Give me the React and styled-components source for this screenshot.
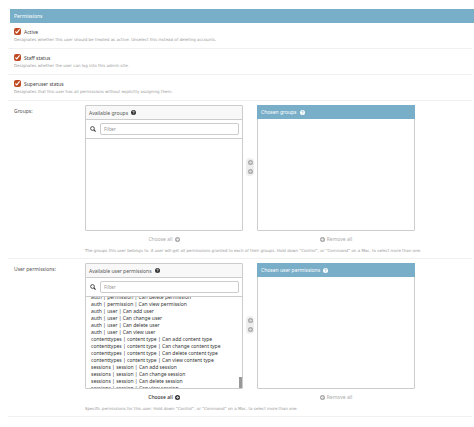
import React from 'react'
import styled, { createGlobalStyle } from 'styled-components'

const apps = [
  ['account', ['email address', 'email confirmation', 'profile', 'address']],
  ['admin', ['log entry']],
  ['auth', ['group', 'permission', 'user']],
  ['contenttypes', ['content type']],
  ['sessions', ['session']],
]
const actions = ['add', 'change', 'delete', 'view']

const permissions = apps.flatMap(([app, models]) =>
  models.flatMap(model =>
    actions.map(action => `${app} | ${model} | Can ${action} ${model}`)
  )
)

const HelpIcon = () => (
  <Icon viewBox="0 0 12 12" aria-hidden="true">
    <circle cx="6" cy="6" r="6" fill="currentColor" />
    <path d="M4 4.6C4 2.2 8 2.2 8 4.6C8 6 6 5.9 6 7.2" fill="none" stroke="var(--hole)" strokeWidth="1.6" />
    <circle cx="6" cy="9.2" r="1" fill="var(--hole)" />
  </Icon>
)

const ArrowIcon = ({ left }) => (
  <Icon viewBox="0 0 12 12" aria-hidden="true">
    <circle cx="6" cy="6" r="6" fill="currentColor" />
    <path
      d={left ? 'M6.6 2.8L3.4 6L6.6 9.2M3.6 6H9' : 'M5.4 2.8L8.6 6L5.4 9.2M8.4 6H3'}
      fill="none" stroke="var(--hole)" strokeWidth="1.8"
    />
  </Icon>
)

const SearchIcon = () => (
  <SearchSvg viewBox="0 0 14 14" aria-hidden="true">
    <circle cx="5.8" cy="5.8" r="4.4" fill="none" stroke="currentColor" strokeWidth="2" />
    <path d="M9 9L13 13" stroke="currentColor" strokeWidth="2.6" />
  </SearchSvg>
)

function CheckField({ id, label, help }) {
  return (
    <CheckRow>
      <CheckLine>
        <Checkbox type="checkbox" id={id} defaultChecked />
        <Label htmlFor={id}>{label}</Label>
      </CheckLine>
      <Help>{help}</Help>
    </CheckRow>
  )
}

function SelectorField({ id, label, name, options = [], help }) {
  const list = React.useRef(null)

  React.useLayoutEffect(() => {
    const el = list.current
    el.scrollTop = el.scrollHeight - el.clientHeight - 4
  }, [])

  return (
    <SelectorRow>
      <FieldLabel htmlFor={id}>{label}</FieldLabel>
      <div>
        <Selector>
          <Box>
            <BoxTitle>Available {name} <HelpIcon /></BoxTitle>
            <FilterBar>
              <label htmlFor={`${id}_filter`} aria-label="Filter"><SearchIcon /></label>
              <FilterInput id={`${id}_filter`} type="text" placeholder="Filter" />
            </FilterBar>
            <List id={id} ref={list} multiple>
              {options.map(option => <option key={option}>{option}</option>)}
            </List>
            {options.length > 0 && <ScrollThumb />}
          </Box>
          <Chooser>
            <ChooserButton type="button" aria-label="Choose"><ArrowIcon /></ChooserButton>
            <ChooserButton type="button" aria-label="Remove"><ArrowIcon left /></ChooserButton>
          </Chooser>
          <Box>
            <BoxTitle $chosen>Chosen {name} <HelpIcon /></BoxTitle>
            <List aria-label={`Chosen ${name}`} multiple />
          </Box>
          <AllLink href="#" $active={options.length > 0}>Choose all <ArrowIcon /></AllLink>
          <span />
          <AllLink href="#"><ArrowIcon left /> Remove all</AllLink>
        </Selector>
        <SelectorHelp>{help}</SelectorHelp>
      </div>
    </SelectorRow>
  )
}

const App = () => (
  <Module>
    <GlobalStyle />
    <Title>Permissions</Title>
    <CheckField
      id="id_is_active"
      label="Active"
      help="Designates whether this user should be treated as active. Unselect this instead of deleting accounts."
    />
    <CheckField
      id="id_is_staff"
      label="Staff status"
      help="Designates whether the user can log into this admin site."
    />
    <CheckField
      id="id_is_superuser"
      label="Superuser status"
      help="Designates that this user has all permissions without explicitly assigning them."
    />
    <SelectorField
      id="id_groups"
      label="Groups:"
      name="groups"
      help="The groups this user belongs to. A user will get all permissions granted to each of their groups. Hold down “Control”, or “Command” on a Mac, to select more than one."
    />
    <SelectorField
      id="id_user_permissions"
      label="User permissions:"
      name="user permissions"
      options={permissions}
      help="Specific permissions for this user. Hold down “Control”, or “Command” on a Mac, to select more than one."
    />
  </Module>
)

const GlobalStyle = createGlobalStyle`
  * {
    box-sizing: border-box;
  }

  body {
    margin: 0;
    background: #fff;
    color: #555;
    font-family: "Noto Sans", Roboto, sans-serif;
    font-size: 5px;
    line-height: 8px;
    --hole: #fff;
  }
`

const Icon = styled.svg`
  width: 5px;
  height: 5px;
  flex: none;
`

const SearchSvg = styled.svg`
  display: block;
  width: 6px;
  height: 6px;
  color: #333;
`

const Module = styled.main`
  padding: 9px 0 8px 8px;
`

const Title = styled.h2`
  margin: 0 0 0 2px;
  padding: 0 4px;
  background: #79aec8;
  color: #fff;
  font-size: 5px;
  font-weight: 400;
  line-height: 14px;
`

const Row = styled.div`
  margin-right: 2px;
  border-bottom: 1px solid #f0f0f0;
`

const CheckRow = styled(Row)`
  padding: 4px 6px;
`

const CheckLine = styled.div`
  display: flex;
  align-items: center;
  gap: 3px;
  height: 9px;
`

const Checkbox = styled.input`
  width: 7px;
  height: 7px;
  margin: 0;
  accent-color: #bf4a22;
`

const Label = styled.label`
  color: #444;
`

const Help = styled.p`
  margin: 0;
  color: #999;
  font-family: "DejaVu Sans", sans-serif;
  font-size: 4px;
`

const SelectorRow = styled(Row)`
  display: grid;
  grid-template-columns: 71px minmax(0, 1fr);
  padding: 4px 0 3px 6px;
`

const FieldLabel = styled.label`
  padding-top: 2px;
`

const Selector = styled.div`
  display: grid;
  grid-template-columns: 1fr 14px 1fr;
  max-width: 330px;
`

const Box = styled.div`
  position: relative;
  display: flex;
  flex-direction: column;
  height: 126px;
  border: 1px solid #ccc;
  border-radius: 1px;
`

const BoxTitle = styled.h3`
  display: flex;
  align-items: center;
  gap: 3px;
  height: 14px;
  margin: ${props => (props.$chosen ? '-1px -1px 0' : '0')};
  padding: 0 ${props => (props.$chosen ? '4px' : '3px')};
  border-bottom: ${props => (props.$chosen ? 'none' : '1px solid #ccc')};
  background: ${props => (props.$chosen ? '#79aec8' : '#f8f8f8')};
  color: ${props => (props.$chosen ? '#fff' : '#555')};
  --hole: ${props => (props.$chosen ? '#79aec8' : '#fff')};
  font-size: 5px;
  font-weight: 400;

  svg {
    color: ${props => (props.$chosen ? '#fff' : '#333')};
  }
`

const FilterBar = styled.div`
  display: flex;
  align-items: center;
  gap: 4px;
  height: 19px;
  padding: 0 3px 0 4px;
  border-bottom: 1px solid #ccc;
`

const FilterInput = styled.input`
  flex: 1;
  min-width: 0;
  height: 12px;
  padding: 0 3px;
  border: 1px solid #ccc;
  border-radius: 2px;
  font: inherit;

  &::placeholder {
    color: #999;
  }
`

const List = styled.select`
  flex: 1;
  width: 100%;
  min-height: 0;
  padding: 0 0 0 3px;
  border: none;
  outline: none;
  background: #fff;
  color: #333;
  font: inherit;
  scrollbar-width: none;

  option {
    min-height: 7px;
    padding: 0 2px;
    line-height: 7px;
  }
`

const ScrollThumb = styled.span`
  position: absolute;
  right: 0;
  bottom: 0;
  width: 3px;
  height: 11px;
  background: #999;
`

const Chooser = styled.div`
  display: flex;
  flex-direction: column;
  align-items: center;
  justify-self: center;
  width: 8px;
  height: 18px;
  margin-top: 53px;
  border-radius: 4px;
  background: #eee;
  --hole: #eee;
`

const ChooserButton = styled.button`
  display: flex;
  align-items: center;
  justify-content: center;
  width: 8px;
  height: 9px;
  padding: 0;
  border: none;
  background: none;
  color: #aaa;
`

const AllLink = styled.a`
  display: flex;
  align-items: center;
  justify-content: center;
  gap: 2px;
  height: 16px;
  color: ${props => (props.$active ? '#333' : '#aaa')};
  font-weight: ${props => (props.$active ? '500' : '400')};
  text-decoration: none;
`

const SelectorHelp = styled(Help)`
  white-space: nowrap;
`

export default App
